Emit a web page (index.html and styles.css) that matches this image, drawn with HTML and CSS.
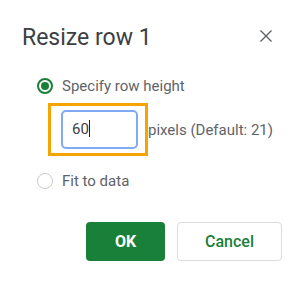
FILE: index.html
```html
<!DOCTYPE html>
<html lang="en">

<head>
    <meta charset="UTF-8">
    <meta name="viewport" content="width=device-width, initial-scale=1.0">
    <title>Resize row 1</title>
    <link rel="stylesheet" href="styles.css">
</head>

<body>
<div class="dialog">
    <div class="dialog-head">
        <span class="dialog-title">Resize row 1</span>
        <span class="close-btn">
            <svg width="24" height="24" viewBox="0 0 24 24">
                <path d="M6.5 6.5 L17.5 17.5 M17.5 6.5 L6.5 17.5" stroke="#5f6368" stroke-width="1.4" fill="none"/>
            </svg>
        </span>
    </div>

    <div class="options">
        <div class="opt-row">
            <span class="radio checked"></span>
            <span class="opt-label">Specify row height</span>
        </div>
        <div class="size-row">
            <div class="highlight">
                <div class="size-inp">60<span class="caret"></span></div>
            </div>
            <span class="opt-label">pixels (Default: 21)</span>
        </div>
        <div class="opt-row fit-row">
            <span class="radio"></span>
            <span class="opt-label">Fit to data</span>
        </div>
    </div>

    <div class="actions">
        <button class="btn btn-ok">OK</button>
        <button class="btn btn-cancel">Cancel</button>
    </div>
</div>
</body>

</html>
```

FILE: styles.css
```css
body {
    margin: 0;
    background: #fff;
    font-family: Roboto, "Liberation Sans", sans-serif;
}
.dialog {
    width: 300px;
    height: 283px;
    box-sizing: border-box;
    padding: 24px 22px 0 22px;
}
.dialog-head {
    display: flex;
    justify-content: space-between;
    align-items: flex-start;
    height: 28px;
}
.dialog-title {
    font-size: 23px;
    line-height: 28px;
    color: #3c4043;
}
.close-btn {
    display: block;
    width: 24px;
    height: 24px;
}
.close-btn svg {
    display: block;
}
.options {
    margin-top: 24px;
    padding-left: 15px;
}
.opt-row {
    display: flex;
    align-items: center;
    height: 20px;
}
.fit-row {
    margin-top: 15px;
}
.radio {
    width: 16px;
    height: 16px;
    box-sizing: border-box;
    border: 1.5px solid #cbcbcb;
    border-radius: 50%;
    margin-right: 9px;
    position: relative;
}
.radio.checked {
    border: 2px solid #188038;
}
.radio.checked::after {
    content: "";
    position: absolute;
    left: 2px;
    top: 2px;
    width: 8px;
    height: 8px;
    border-radius: 50%;
    background: #188038;
}
.opt-label {
    font-size: 15px;
    line-height: 20px;
    color: #5f6368;
}
.size-row {
    display: flex;
    align-items: center;
    margin-top: 7px;
    margin-left: 11px;
}
.highlight {
    border: 3px solid #f6a400;
    padding: 4px 7px 4px 10px;
}
.size-inp {
    width: 77px;
    height: 39px;
    box-sizing: border-box;
    border: 2px solid #80aaf3;
    border-radius: 5px;
    padding-left: 9px;
    font-size: 15px;
    line-height: 35px;
    color: #3c4043;
}
.caret {
    display: inline-block;
    width: 1px;
    height: 17px;
    background: #202124;
    vertical-align: -3px;
}
.actions {
    display: flex;
    justify-content: flex-end;
    gap: 12px;
    margin-top: 31px;
    margin-right: -4px;
}
.btn {
    height: 39px;
    border-radius: 4px;
    font-family: Roboto, "Liberation Sans", sans-serif;
    font-size: 16px;
    cursor: pointer;
}
.btn-ok {
    width: 79px;
    border: none;
    background: #188038;
    color: #fff;
    font-weight: bold;
}
.btn-cancel {
    width: 105px;
    border: 1px solid #dadce0;
    background: #fff;
    color: #188038;
    font-weight: 500;
}
```
